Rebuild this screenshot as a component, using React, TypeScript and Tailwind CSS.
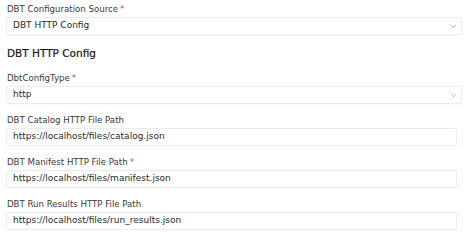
import { ChevronDown } from "lucide-react";

function Label({ text, required }: { text: string; required?: boolean }) {
  return (
    <div className="text-[8.6px] leading-[12px] text-[#3a3a3a] mb-[2px] pl-[1px]">
      {text}
      {required && <span className="text-[#e53935] ml-[2px]">*</span>}
    </div>
  );
}

function SelectField({ label, value, required }: { label: string; value: string; required?: boolean }) {
  return (
    <div>
      <Label text={label} required={required} />
      <div className="h-[18px] w-[456px] flex items-center justify-between border border-[#ececec] rounded-[2px] bg-white pl-[6px] pr-[3px] shadow-[0_1px_1px_rgba(0,0,0,0.03)]">
        <span className="text-[9px] text-[#2a2a2a]">{value}</span>
        <ChevronDown className="w-[9px] h-[9px] text-[#777]" strokeWidth={1.5} />
      </div>
    </div>
  );
}

function InputField({ label, value, required }: { label: string; value: string; required?: boolean }) {
  return (
    <div>
      <Label text={label} required={required} />
      <div className="w-[457px] flex">
        <div className="h-[18px] w-[451px] flex items-center border border-[#ececec] rounded-[2px] bg-white pl-[6px]">
          <span className="text-[9px] text-[#2a2a2a]">{value}</span>
        </div>
        <div className="w-[6px] h-[18px] border-y border-r border-[#f6f6f6]" />
      </div>
    </div>
  );
}

export default function App() {
  return (
    <div className="w-[474px] h-[239px] bg-white pl-[6px] pt-[3px] font-['DejaVu_Sans',sans-serif]">
      <SelectField label="DBT Configuration Source" value="DBT HTTP Config" required />
      <div className="text-[10.5px] leading-[14px] text-[#151515] [-webkit-text-stroke:0.2px_#151515] mt-[11px] mb-[12px] pl-[1px]">DBT HTTP Config</div>
      <div className="flex flex-col gap-[10px]">
        <SelectField label="DbtConfigType" value="http" required />
        <InputField label="DBT Catalog HTTP File Path" value="https://localhost/files/catalog.json" />
        <InputField label="DBT Manifest HTTP File Path" value="https://localhost/files/manifest.json" required />
        <InputField label="DBT Run Results HTTP File Path" value="https://localhost/files/run_results.json" />
      </div>
    </div>
  );
}
